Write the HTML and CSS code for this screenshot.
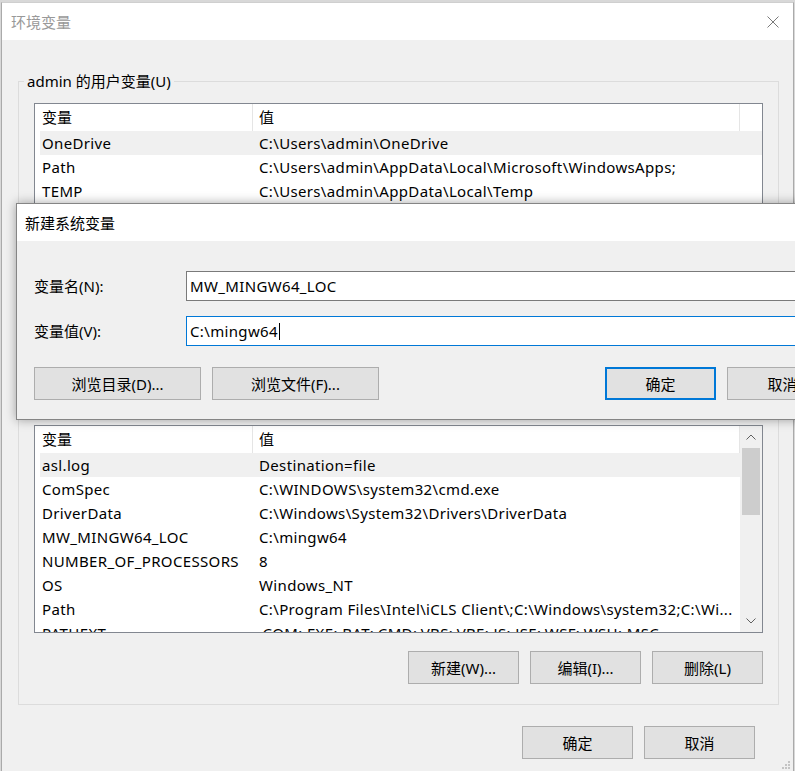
FILE: index.html
```html
<!DOCTYPE html>
<html lang="zh-CN">
<head>
  <meta charset="UTF-8" />
  <title>环境变量</title>
  <link rel="stylesheet" href="styles.css">
</head>
<body>

  <!-- 环境变量 window -->
  <div class="window">
    <div class="titlebar">
      <span class="title inactive">环境变量</span>
      <svg class="close" width="12" height="12" viewBox="0 0 12 12">
        <path d="M0.5 0.5 L11.5 11.5 M11.5 0.5 L0.5 11.5" stroke="#7a7a7a" stroke-width="1" fill="none" />
      </svg>
    </div>

    <div class="window-body">
      <fieldset class="group">
        <legend>admin 的用户变量(U)</legend>
        <div class="listview">
          <div class="lv-head"><span>变量</span><span>值</span></div>
          <div class="lv-row hot"><span>OneDrive</span><span>C:\Users\admin\OneDrive</span></div>
          <div class="lv-row"><span>Path</span><span>C:\Users\admin\AppData\Local\Microsoft\WindowsApps;</span></div>
          <div class="lv-row"><span>TEMP</span><span>C:\Users\admin\AppData\Local\Temp</span></div>
        </div>
        <div class="btn-row">
          <button class="btn">新建(N)...</button>
          <button class="btn">编辑(E)...</button>
          <button class="btn">删除(D)</button>
        </div>
      </fieldset>

      <fieldset class="group sys">
        <legend>系统变量(S)</legend>
        <div class="listview">
          <div class="lv-head"><span>变量</span><span>值</span></div>
          <div class="lv-row hot"><span>asl.log</span><span>Destination=file</span></div>
          <div class="lv-row"><span>ComSpec</span><span>C:\WINDOWS\system32\cmd.exe</span></div>
          <div class="lv-row"><span>DriverData</span><span>C:\Windows\System32\Drivers\DriverData</span></div>
          <div class="lv-row"><span>MW_MINGW64_LOC</span><span>C:\mingw64</span></div>
          <div class="lv-row"><span>NUMBER_OF_PROCESSORS</span><span>8</span></div>
          <div class="lv-row"><span>OS</span><span>Windows_NT</span></div>
          <div class="lv-row"><span>Path</span><span>C:\Program Files\Intel\iCLS Client\;C:\Windows\system32;C:\Wi...</span></div>
          <div class="lv-row"><span>PATHEXT</span><span>.COM;.EXE;.BAT;.CMD;.VBS;.VBE;.JS;.JSE;.WSF;.WSH;.MSC</span></div>
          <div class="scrollbar">
            <svg class="arrow up" width="10" height="6" viewBox="0 0 10 6"><path d="M0.5 5.5 L5 1 L9.5 5.5" stroke="#606060" fill="none" /></svg>
            <div class="thumb"></div>
            <svg class="arrow down" width="10" height="6" viewBox="0 0 10 6"><path d="M0.5 0.5 L5 5 L9.5 0.5" stroke="#606060" fill="none" /></svg>
          </div>
        </div>
        <div class="btn-row">
          <button class="btn">新建(W)...</button>
          <button class="btn">编辑(I)...</button>
          <button class="btn">删除(L)</button>
        </div>
      </fieldset>

      <div class="btn-row footer">
        <button class="btn">确定</button>
        <button class="btn">取消</button>
      </div>
    </div>

    <svg class="grip" width="8" height="8" viewBox="0 0 8 8">
      <rect x="6" y="0" width="2" height="2" fill="#c4c4c4" />
      <rect x="3" y="3" width="2" height="2" fill="#c4c4c4" />
      <rect x="6" y="3" width="2" height="2" fill="#c4c4c4" />
      <rect x="0" y="6" width="2" height="2" fill="#c4c4c4" />
      <rect x="3" y="6" width="2" height="2" fill="#c4c4c4" />
      <rect x="6" y="6" width="2" height="2" fill="#c4c4c4" />
    </svg>
  </div>

  <!-- 新建系统变量 dialog -->
  <div class="dialog">
    <div class="titlebar dlg-title">
      <span class="title">新建系统变量</span>
    </div>
    <div class="dialog-body">
      <div class="form">
        <label>变量名(N):</label>
        <div class="textbox">MW_MINGW64_LOC</div>
        <label>变量值(V):</label>
        <div class="textbox focus">C:\mingw64<span class="caret"></span></div>
      </div>
      <div class="btn-row dlg-buttons">
        <button class="btn wide">浏览目录(D)...</button>
        <button class="btn wide">浏览文件(F)...</button>
        <button class="btn default">确定</button>
        <button class="btn">取消</button>
      </div>
    </div>
  </div>

</body>
</html>
```

FILE: styles.css
```css
* { margin: 0; padding: 0; box-sizing: border-box; }
html, body {
  height: 100%;
}
body {
  position: relative;
  background: #d8d8d8;
  color: #000;
  font-family: "Noto Sans", "Noto Sans CJK SC", sans-serif;
  font-size: 15px;
  line-height: 20px;
  overflow: hidden;
}

/* main window */
.window {
  position: relative;
  display: flex;
  flex-direction: column;
  width: 793px;
  height: 769px;
  margin: 2px 0 0 1px;
  background: #f0f0f0;
  border: 1px solid #aaa;
  border-top-color: #cfcfcf;
  border-bottom: none;
}
.titlebar {
  display: flex;
  align-items: center;
  justify-content: space-between;
  height: 37px;
  padding: 0 14px 0 9px;
  background: #fff;
  flex-shrink: 0;
}
.title.inactive { color: #999; }
.close { display: block; }

.window-body {
  padding: 31px 14px 0 16px;
}

/* group boxes */
.group {
  border: 1px solid #dcdcdc;
  padding: 12px 15px 20px;
}
.group legend {
  margin-left: -10px;
  padding: 0 3px;
  line-height: 20px;
}
.group.sys { margin-top: 10px; }

/* list views */
.listview {
  position: relative;
  height: 208px;
  padding-left: 5px;
  background: #fff;
  border: 1px solid #828790;
  overflow: hidden;
}
.lv-head, .lv-row {
  display: grid;
  grid-template-columns: 213px 487px;
  white-space: nowrap;
}
.lv-head { height: 27px; line-height: 27px; }
.lv-head span:first-child { border-right: 1px solid #e5e5e5; }
.lv-head span:last-child { border-right: 1px solid #e5e5e5; }
.lv-row { height: 24px; line-height: 24px; }
.lv-head span, .lv-row span { overflow: hidden; padding-left: 2px; }
.lv-head span + span, .lv-row span + span { padding-left: 6px; }
.lv-row span { letter-spacing: 0.35px; }
.lv-row.hot { background: #f0f0f0; }

.scrollbar {
  position: absolute;
  top: 0;
  right: 0;
  bottom: 0;
  width: 22px;
  background: #f0f0f0;
}
.scrollbar .thumb {
  position: absolute;
  top: 22px;
  left: 2px;
  width: 18px;
  height: 67px;
  background: #cdcdcd;
}
.arrow {
  position: absolute;
  left: 6px;
}
.arrow.up { top: 8px; }
.arrow.down { bottom: 8px; }

/* buttons */
.btn-row {
  display: flex;
  justify-content: flex-end;
  gap: 11px;
  margin-top: 18px;
}
.btn {
  width: 111px;
  height: 33px;
  background: #e1e1e1;
  border: 1px solid #adadad;
  font: inherit;
  color: #000;
}
.btn.wide { width: 167px; }
.btn.default { border: 2px solid #0078d7; margin-left: 215px; }
.footer { margin: 21px 24px 0 0; }

.grip {
  position: absolute;
  right: 3px;
  bottom: 2px;
}

/* new variable dialog */
.dialog {
  position: absolute;
  top: 203px;
  left: 16px;
  width: 900px;
  height: 217px;
  border: 1px solid #858585;
  background: #f0f0f0;
  box-shadow: 0 0 10px rgba(0, 0, 0, 0.35);
}
.dlg-title { padding-left: 8px; }
.dialog-body {
  padding: 30px 0 19px 17px;
}
.form {
  display: grid;
  grid-template-columns: 152px 700px;
  row-gap: 15px;
  align-items: center;
}
.textbox {
  height: 30px;
  padding: 0 3px;
  line-height: 28px;
  letter-spacing: 0.35px;
  background: #fff;
  border: 1px solid #7a7a7a;
  white-space: nowrap;
}
.textbox.focus { border-color: #0078d7; }
.caret {
  display: inline-block;
  width: 1px;
  height: 17px;
  margin-left: 1px;
  vertical-align: -3px;
  background: #000;
}
.dlg-buttons {
  justify-content: flex-start;
  margin-top: 21px;
}
```
